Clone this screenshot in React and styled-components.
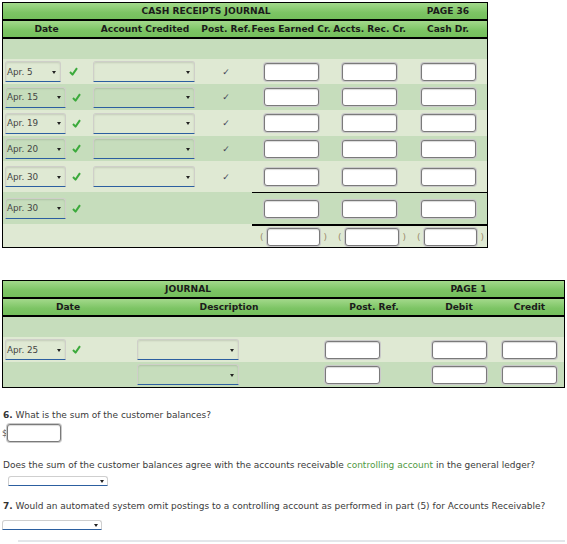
import React from 'react';
import styled, { createGlobalStyle } from 'styled-components';

const GlobalStyle = createGlobalStyle`
  body {
    margin: 0;
    background: #fff;
    font-family: "DejaVu Sans", Verdana, sans-serif;
    color: #333;
  }
`

const Page = styled.div`
  width: 567px;
  padding: 2px 2px 0 2px;
  box-sizing: border-box;
`

const Journal = styled.div`
  width: ${(p) => p.$width}px;
  border: 1px solid #000;
  box-sizing: border-box;
  margin-bottom: ${(p) => p.$mb || 0}px;
`

const Row = styled.div`
  display: grid;
  grid-template-columns: ${(p) => p.$cols};
  height: ${(p) => p.$h}px;
  background: ${(p) => (p.$tone === 'light' ? '#dfe9d3' : '#c6ddbc')};
`

const HeadRow = styled.div`
  display: grid;
  grid-template-columns: ${(p) => p.$cols};
  height: ${(p) => p.$h}px;
  background: linear-gradient(#a3d98b, #7cc464 60%, #74bf5c);
  border-bottom: 2px solid #000;
  font-size: 9.1px;
  font-weight: bold;
  color: #1b1b1b;
`

const HeadCell = styled.div`
  display: flex;
  align-items: center;
  justify-content: center;
  white-space: nowrap;
  min-width: 0;
  grid-column: ${(p) => p.$span || 'auto'};
`

const Cell = styled.div`
  display: flex;
  align-items: center;
  justify-content: ${(p) => (p.$center ? 'center' : 'flex-start')};
  padding-left: ${(p) => p.$pl || 0}px;
  min-width: 0;
  border-top: ${(p) => (p.$rule ? `${p.$rule}px solid #000` : 'none')};
  box-sizing: border-box;
  white-space: nowrap;
`

const Dropdown = styled.div`
  position: relative;
  width: ${(p) => p.$w}px;
  height: ${(p) => p.$h || 21}px;
  box-sizing: border-box;
  border: 1px solid #cfcfc9;
  border-bottom: 1px solid #2c5fa0;
  border-radius: 3px 3px 0 0;
  box-shadow: inset 0 1px 2px rgba(0, 0, 0, 0.12);
  font-size: 8.8px;
  color: #444;
  display: flex;
  align-items: center;
  padding-left: 1px;
  &::after {
    content: '';
    position: absolute;
    right: 4px;
    top: 50%;
    margin-top: -1px;
    border-left: 2.5px solid transparent;
    border-right: 2.5px solid transparent;
    border-top: 3px solid #222;
  }
`

const CheckMark = styled.svg`
  margin-left: ${(p) => p.$ml || 7}px;
  flex: none;
`

function Check({ ml }) {
  return (
    <CheckMark $ml={ml} width="9" height="9" viewBox="0 0 9 9">
      <path d="M1 5 L3.5 7.6 L8 1.2" fill="none" stroke="#3caa3c" strokeWidth="2" strokeLinejoin="round" />
    </CheckMark>
  )
}

const RefCheck = styled.span`
  color: #445;
  font-size: 9px;
`

const Box = styled.div`
  width: ${(p) => p.$w || 55}px;
  height: ${(p) => p.$h || 18}px;
  box-sizing: border-box;
  background: #fff;
  border: 1px solid #7a7a7a;
  border-radius: 3px;
  box-shadow: 0 0 0 1px #c9c9c9, inset 0 1px 1px rgba(0, 0, 0, 0.15);
`

const Paren = styled.span`
  color: #9a8a6a;
  font-size: 9px;
  margin: 0 3px;
`

const Question = styled.p`
  margin: 0;
  font-size: 9px;
  line-height: 11px;
  color: #3a3a3a;
  padding-left: ${(p) => p.$pl || 1}px;
  margin-top: ${(p) => p.$mt || 0}px;
`

const Num = styled.b`
  color: #333;
`

const Link = styled.span`
  color: #4f9a43;
`

const AnswerRow = styled.div`
  display: flex;
  align-items: center;
  margin-top: ${(p) => p.$mt || 0}px;
  padding-left: ${(p) => p.$pl || 0}px;
  font-size: 8.5px;
  color: #555;
`

const PlainSelect = styled.div`
  position: relative;
  width: ${(p) => p.$w}px;
  height: 10px;
  box-sizing: border-box;
  border: 1px solid #cfcfcf;
  border-bottom: 1px solid #2c5fa0;
  border-radius: 3px 3px 0 0;
  &::after {
    content: '';
    position: absolute;
    right: 3px;
    top: 3px;
    border-left: 2.5px solid transparent;
    border-right: 2.5px solid transparent;
    border-top: 3px solid #222;
  }
`

const Rule = styled.div`
  margin: 10px 0 0 16px;
  height: 2px;
  background: #e3e6ea;
`

const CR_COLS = '87px 110px 52px 78px 79px 78px'
const GJ_COLS = '130px 192px 98px 72px 69px'

const crRows = [
  { date: 'Apr. 5', w: 56, h: 25, tone: 'light', acct: true },
  { date: 'Apr. 15', w: 61, h: 26, tone: 'dark', acct: true },
  { date: 'Apr. 19', w: 61, h: 26, tone: 'light', acct: true },
  { date: 'Apr. 20', w: 61, h: 25, tone: 'dark', acct: true },
  { date: 'Apr. 30', w: 61, h: 31, tone: 'light', acct: true },
  { date: 'Apr. 30', w: 61, h: 32, tone: 'dark', acct: false, rule: 1 },
]

function CashReceipts() {
  return (
    <Journal $width={486} $mb={32}>
      <HeadRow $cols={CR_COLS} $h={16}>
        <HeadCell $span="1 / 6">CASH RECEIPTS JOURNAL</HeadCell>
        <HeadCell>PAGE 36</HeadCell>
      </HeadRow>
      <HeadRow $cols={CR_COLS} $h={16}>
        <HeadCell>Date</HeadCell>
        <HeadCell>Account Credited</HeadCell>
        <HeadCell>Post. Ref.</HeadCell>
        <HeadCell>Fees Earned Cr.</HeadCell>
        <HeadCell>Accts. Rec. Cr.</HeadCell>
        <HeadCell>Cash Dr.</HeadCell>
      </HeadRow>
      <Row $cols={CR_COLS} $h={20} $tone="dark" />
      {crRows.map((r, i) => (
        <Row key={i} $cols={CR_COLS} $h={r.h} $tone={r.tone}>
          <Cell $pl={2}>
            <Dropdown $w={r.w}>{r.date}</Dropdown>
            <Check ml={i === 0 ? 8 : 6} />
          </Cell>
          <Cell $pl={3}>{r.acct && <Dropdown $w={102} />}</Cell>
          <Cell $center>{r.acct && <RefCheck>✓</RefCheck>}</Cell>
          <Cell $center $rule={r.rule}><Box /></Cell>
          <Cell $center $rule={r.rule}><Box /></Cell>
          <Cell $center $rule={r.rule}><Box /></Cell>
        </Row>
      ))}
      <Row $cols={CR_COLS} $h={23} $tone="light">
        <Cell />
        <Cell />
        <Cell />
        <Cell $pl={5} $rule={2}><Paren>(</Paren><Box /><Paren>)</Paren></Cell>
        <Cell $pl={5} $rule={2}><Paren>(</Paren><Box /><Paren>)</Paren></Cell>
        <Cell $pl={5} $rule={2}><Paren>(</Paren><Box /><Paren>)</Paren></Cell>
      </Row>
    </Journal>
  )
}

function GeneralJournal() {
  return (
    <Journal $width={563} $mb={22}>
      <HeadRow $cols="370px 191px" $h={16}>
        <HeadCell>JOURNAL</HeadCell>
        <HeadCell>PAGE 1</HeadCell>
      </HeadRow>
      <HeadRow $cols={GJ_COLS} $h={16}>
        <HeadCell>Date</HeadCell>
        <HeadCell>Description</HeadCell>
        <HeadCell>Post. Ref.</HeadCell>
        <HeadCell>Debit</HeadCell>
        <HeadCell>Credit</HeadCell>
      </HeadRow>
      <Row $cols={GJ_COLS} $h={20} $tone="dark" />
      <Row $cols={GJ_COLS} $h={25} $tone="light">
        <Cell $pl={2}>
          <Dropdown $w={61}>Apr. 25</Dropdown>
          <Check ml={6} />
        </Cell>
        <Cell $pl={4}><Dropdown $w={102} /></Cell>
        <Cell><Box /></Cell>
        <Cell $center><Box /></Cell>
        <Cell $center><Box /></Cell>
      </Row>
      <Row $cols={GJ_COLS} $h={25} $tone="dark">
        <Cell />
        <Cell $pl={4}><Dropdown $w={102} /></Cell>
        <Cell><Box /></Cell>
        <Cell $center><Box /></Cell>
        <Cell $center><Box /></Cell>
      </Row>
    </Journal>
  )
}

const App = () => {
  return (
    <Page>
      <GlobalStyle />
      <CashReceipts />
      <GeneralJournal />
      <Question><Num>6.</Num> What is the sum of the customer balances?</Question>
      <AnswerRow $mt={3}>$<Box $w={54} $h={18} /></AnswerRow>
      <Question $mt={18}>
        Does the sum of the customer balances agree with the accounts receivable <Link>controlling account</Link> in the general ledger?
      </Question>
      <AnswerRow $mt={5} $pl={6}><PlainSelect $w={100} /></AnswerRow>
      <Question $mt={15}><Num>7.</Num> Would an automated system omit postings to a controlling account as performed in part (5) for Accounts Receivable?</Question>
      <AnswerRow $mt={8}><PlainSelect $w={100} /></AnswerRow>
      <Rule />
    </Page>
  )
}

export default App
